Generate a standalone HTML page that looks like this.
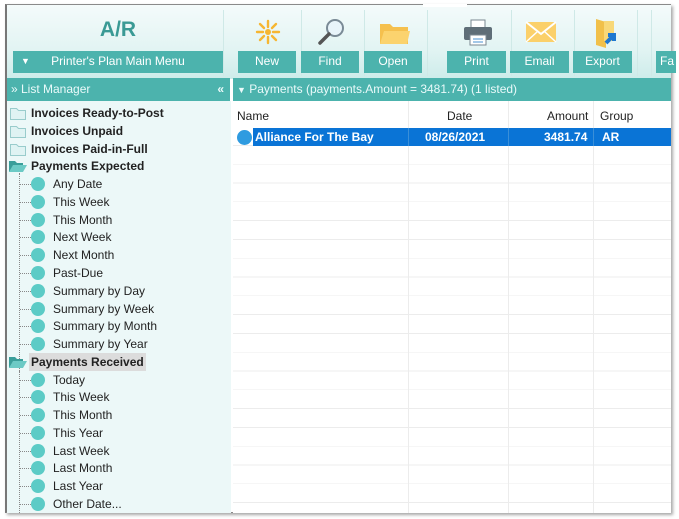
<!DOCTYPE html>
<html><head><meta charset="utf-8"><style>
*{margin:0;padding:0;box-sizing:border-box}
body{width:679px;height:519px;background:#fff;position:relative;overflow:hidden;font-family:"Liberation Sans",sans-serif}
.win{position:absolute;left:5px;top:4px;width:666px;height:509px;border:1px solid #8a8a8a;border-left:2px solid #777;background:#fff;box-shadow:2px 2px 3px rgba(0,0,0,.35)}
.tb{position:absolute;left:0;top:0;width:664px;height:74px;background:linear-gradient(#f4fbfb,#e2f4f3 60%,#cdecea)}
.a{position:absolute;font-size:12px;color:#fff;background:#4cb3ad;text-align:center;line-height:21px}
.sep{position:absolute;top:5px;width:1px;height:66px;background:#cfe9e7}
.hdr{position:absolute;top:73px;height:23px;background:#4cb3ad;color:#eafafa;font-size:12px;line-height:23px}
.left{position:absolute;left:0;top:96px;width:224px;height:412px;background:#ecf8f8}
.it{position:absolute;left:0;height:18px;font-size:12px;line-height:18px;color:#222;white-space:nowrap}
.b{font-weight:bold}
.dot{position:absolute;left:24px;top:2px;width:14px;height:14px;border-radius:50%;background:#5ccbc6}
.hl{position:absolute;left:13px;top:9px;width:11px;border-top:1px dotted #888}
.grid{position:absolute;left:226px;top:122px;width:438px;height:386px;background:repeating-linear-gradient(#fff 0,#fff 18px,#ececec 18px,#ececec 18.8px)}
.vl{position:absolute;top:96px;width:1px;height:412px;background:#ececec}
</style></head><body>
<div class="win">
<div class="tb">
 <div style="position:absolute;left:6px;top:13px;width:210px;text-align:center;font-size:21px;font-weight:bold;color:#3a9a95">A/R</div>
 <div class="sep" style="left:216px"></div>
 <div class="a" style="left:6px;top:46px;width:210px;height:22px"><span style="position:absolute;left:8px;top:0;font-size:9px">▼</span>Printer's Plan Main Menu</div>
 <div class="sep" style="left:294px"></div><div class="sep" style="left:357px"></div><div class="sep" style="left:420px"></div><div class="sep" style="left:504px"></div><div class="sep" style="left:567px"></div><div class="sep" style="left:630px"></div><div class="sep" style="left:644px"></div>
 <div style="position:absolute;left:416px;top:-1px;width:44px;height:3px;background:#fff"></div>
 <!-- icons -->
 <svg style="position:absolute;left:248px;top:14px" width="26" height="26" viewBox="0 0 26 26" stroke="#f6b632" stroke-width="2.4" stroke-linecap="round"><circle cx="13" cy="13" r="3" fill="#f6b632" stroke="none"/><path d="M13 2v6M13 18v6M2 13h6M18 13h6M5 5l4 4M17 17l4 4M21 5l-4 4M9 17l-4 4"/></svg>
 <svg style="position:absolute;left:310px;top:12px" width="30" height="30" viewBox="0 0 30 30"><circle cx="18" cy="11" r="8" fill="#e8f4fa" stroke="#7a8a96" stroke-width="2"/><path d="M12 17L3 26" stroke="#555" stroke-width="3.5" stroke-linecap="round"/></svg>
 <svg style="position:absolute;left:372px;top:16px" width="32" height="24" viewBox="0 0 32 24"><path d="M1 3h10l3 3h15v17H1z" fill="#f5c04e"/><path d="M1 23l4-13h26l-3 13z" fill="#fbd36e"/></svg>
 <svg style="position:absolute;left:456px;top:14px" width="30" height="28" viewBox="0 0 30 28"><rect x="8" y="1" width="14" height="8" fill="#fff" stroke="#7a8790"/><rect x="1" y="8" width="28" height="13" rx="2" fill="#5f6e78"/><rect x="7" y="16" width="16" height="10" fill="#fff" stroke="#7a8790"/><path d="M10 20h10M10 23h10" stroke="#4a90d0"/></svg>
 <svg style="position:absolute;left:518px;top:16px" width="32" height="22" viewBox="0 0 32 22"><rect x="1" y="1" width="30" height="20" fill="#fbd06a"/><path d="M1 1l15 12L31 1" fill="none" stroke="#fff" stroke-width="2"/><path d="M1 21l11-10M31 21L20 11" stroke="#fff" stroke-width="1.5"/></svg>
 <svg style="position:absolute;left:587px;top:12px" width="26" height="32" viewBox="0 0 26 32"><path d="M2 2l10 3v26L2 28z" fill="#f1c04a"/><path d="M10 4h10v20H10z" fill="#f8d878"/><path d="M12 26l7-7M14 18h6v6" stroke="#1e78d0" stroke-width="4" fill="none"/></svg>
 <div class="a" style="left:231px;top:46px;width:58px;height:22px">New</div>
 <div class="a" style="left:294px;top:46px;width:58px;height:22px">Find</div>
 <div class="a" style="left:357px;top:46px;width:58px;height:22px">Open</div>
 <div class="a" style="left:440px;top:46px;width:59px;height:22px">Print</div>
 <div class="a" style="left:503px;top:46px;width:59px;height:22px">Email</div>
 <div class="a" style="left:566px;top:46px;width:59px;height:22px">Export</div>
 <div class="a" style="left:649px;top:46px;width:20px;height:22px;text-align:left;padding-left:4px">Fa</div>
</div>
<div class="hdr" style="left:0;width:223px;padding-left:4px">» List Manager<span style="position:absolute;right:6px;font-weight:bold">«</span></div>
<div class="hdr" style="left:226px;width:438px;padding-left:4px"><span style="font-size:9px">▼</span> Payments (payments.Amount = 3481.74) (1 listed)</div>
<div class="left">
 <div style="position:absolute;left:12px;top:72px;height:256px;border-left:1px dotted #888"></div>
 <div style="position:absolute;left:12px;top:270px;height:142px;border-left:1px dotted #888"></div>
</div>
<div id="tree"></div>
<div class="grid"></div>
<div style="position:absolute;left:226px;top:96px;width:438px;height:26px;background:#fff;font-size:12px;color:#222">
 <span style="position:absolute;left:4px;top:8px">Name</span>
 <span style="position:absolute;left:214px;top:8px">Date</span>
 <span style="position:absolute;left:314px;top:8px">Amount</span>
 <span style="position:absolute;left:367px;top:8px">Group</span>
</div>
<div class="vl" style="left:401px"></div><div class="vl" style="left:501px"></div><div class="vl" style="left:586px"></div>
<div style="position:absolute;left:230px;top:125px;width:15px;height:15px;border-radius:50%;background:#2f9be0"></div>
<div style="position:absolute;left:246px;top:123px;width:418px;height:18px;background:#0a74d6;color:#fff;font-size:12px;font-weight:bold;line-height:18px">
 <span style="position:absolute;left:2px">Alliance For The Bay</span>
 <span style="position:absolute;left:172px">08/26/2021</span>
 <span style="position:absolute;left:291px">3481.74</span>
 <span style="position:absolute;left:349px">AR</span>
 <div style="position:absolute;left:155px;top:0;width:1px;height:18px;background:#3a8fd8"></div>
 <div style="position:absolute;left:255px;top:0;width:1px;height:18px;background:#3a8fd8"></div>
 <div style="position:absolute;left:340px;top:0;width:1px;height:18px;background:#3a8fd8"></div>
</div>
<div style="position:absolute;left:0;top:99px;width:224px">
<div class="it b" style="top:0"><svg style="position:absolute;left:3px;top:3px" width="16" height="13"><path d="M0.5 1.5h6l2 2h7v9h-15z" fill="#dff3f3" stroke="#9cc"/></svg><span style="position:absolute;left:24px">Invoices Ready-to-Post</span></div>
<div class="it b" style="top:17.8px"><svg style="position:absolute;left:3px;top:3px" width="16" height="13"><path d="M0.5 1.5h6l2 2h7v9h-15z" fill="#dff3f3" stroke="#9cc"/></svg><span style="position:absolute;left:24px">Invoices Unpaid</span></div>
<div class="it b" style="top:35.5px"><svg style="position:absolute;left:3px;top:3px" width="16" height="13"><path d="M0.5 1.5h6l2 2h7v9h-15z" fill="#dff3f3" stroke="#9cc"/></svg><span style="position:absolute;left:24px">Invoices Paid-in-Full</span></div>
<div class="it b" style="top:53.3px"><svg style="position:absolute;left:2px;top:3px" width="18" height="13"><path d="M0 1h6l2 2h6v3H4L0 12z" fill="#3a9e9a"/><path d="M0 12l4-7h14l-4 7z" fill="#6ccac5"/></svg><span style="position:absolute;left:24px">Payments Expected</span></div>
<div class="it" style="top:71.1px"><i class="hl"></i><i class="dot"></i><span style="position:absolute;left:46px">Any Date</span></div>
<div class="it" style="top:88.9px"><i class="hl"></i><i class="dot"></i><span style="position:absolute;left:46px">This Week</span></div>
<div class="it" style="top:106.6px"><i class="hl"></i><i class="dot"></i><span style="position:absolute;left:46px">This Month</span></div>
<div class="it" style="top:124.4px"><i class="hl"></i><i class="dot"></i><span style="position:absolute;left:46px">Next Week</span></div>
<div class="it" style="top:142.2px"><i class="hl"></i><i class="dot"></i><span style="position:absolute;left:46px">Next Month</span></div>
<div class="it" style="top:160px"><i class="hl"></i><i class="dot"></i><span style="position:absolute;left:46px">Past-Due</span></div>
<div class="it" style="top:177.7px"><i class="hl"></i><i class="dot"></i><span style="position:absolute;left:46px">Summary by Day</span></div>
<div class="it" style="top:195.5px"><i class="hl"></i><i class="dot"></i><span style="position:absolute;left:46px">Summary by Week</span></div>
<div class="it" style="top:213.3px"><i class="hl"></i><i class="dot"></i><span style="position:absolute;left:46px">Summary by Month</span></div>
<div class="it" style="top:231px"><i class="hl"></i><i class="dot"></i><span style="position:absolute;left:46px">Summary by Year</span></div>
<div class="it b" style="top:248.8px;width:224px"><svg style="position:absolute;left:2px;top:3px" width="18" height="13"><path d="M0 1h6l2 2h6v3H4L0 12z" fill="#3a9e9a"/><path d="M0 12l4-7h14l-4 7z" fill="#6ccac5"/></svg><span style="position:absolute;left:22px;padding:0 2px;background:#dcdcdc">Payments Received</span></div>
<div class="it" style="top:266.6px"><i class="hl"></i><i class="dot"></i><span style="position:absolute;left:46px">Today</span></div>
<div class="it" style="top:284.4px"><i class="hl"></i><i class="dot"></i><span style="position:absolute;left:46px">This Week</span></div>
<div class="it" style="top:302.1px"><i class="hl"></i><i class="dot"></i><span style="position:absolute;left:46px">This Month</span></div>
<div class="it" style="top:319.9px"><i class="hl"></i><i class="dot"></i><span style="position:absolute;left:46px">This Year</span></div>
<div class="it" style="top:337.7px"><i class="hl"></i><i class="dot"></i><span style="position:absolute;left:46px">Last Week</span></div>
<div class="it" style="top:355.4px"><i class="hl"></i><i class="dot"></i><span style="position:absolute;left:46px">Last Month</span></div>
<div class="it" style="top:373.2px"><i class="hl"></i><i class="dot"></i><span style="position:absolute;left:46px">Last Year</span></div>
<div class="it" style="top:391px"><i class="hl"></i><i class="dot"></i><span style="position:absolute;left:46px">Other Date...</span></div>
</div>
</div>
</body></html>
